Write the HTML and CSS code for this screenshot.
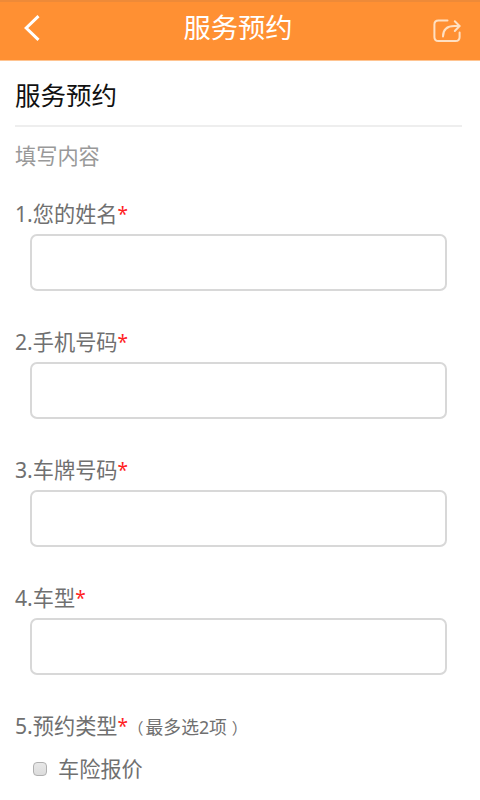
FILE: index.html
```html
<!DOCTYPE html>
<html lang="zh-CN">
<head>
<meta charset="utf-8">
<title>服务预约</title>
<link rel="stylesheet" href="styles.css">
</head>
<body>
<header class="bar">
  <svg class="back" width="18" height="30" viewBox="0 0 18 30"><path d="M15.5 3.2 3.2 15 15.5 26.8"/></svg>
  <h1 class="bar-title">服务预约</h1>
  <svg class="share" width="30" height="26" viewBox="0 0 30 26"><path d="M15.5 2.4H6.5Q2.4 2.4 2.4 6.5V19Q2.4 23.1 6.5 23.1H23.5Q27.6 23.1 27.6 19V14.5"/><path d="M11 18.5C11 12 15 8 22.5 8H26.5M22.8 3.2 27.6 8 22.8 13"/></svg>
</header>
<main class="page">
  <h2 class="heading">服务预约</h2>
  <p class="hint">填写内容</p>
  <form>
    <div class="question"><label class="label" for="q1">1.您的姓名<span class="required">*</span></label><input class="field" id="q1" type="text"></div>
    <div class="question"><label class="label" for="q2">2.手机号码<span class="required">*</span></label><input class="field" id="q2" type="text"></div>
    <div class="question"><label class="label" for="q3">3.车牌号码<span class="required">*</span></label><input class="field" id="q3" type="text"></div>
    <div class="question"><label class="label" for="q4">4.车型<span class="required">*</span></label><input class="field" id="q4" type="text"></div>
    <div class="question">
      <div class="label">5.预约类型<span class="required">*</span><span class="note"><span class="paren open">（</span>最多选2项<span class="paren close">）</span></span></div>
      <label class="option"><input class="check" type="checkbox"><span>车险报价</span></label>
    </div>
  </form>
</main>
</body>
</html>
```

FILE: styles.css
```css
* {
  box-sizing: border-box;
}

body {
  margin: 0;
  height: 800px;
  overflow: hidden;
  background: #fff;
  color: #707070;
  font-family: "Noto Sans", "Noto Sans CJK SC", sans-serif;
}

h1, h2, p {
  margin: 0;
  font-weight: 400;
}

.bar {
  display: flex;
  align-items: center;
  justify-content: space-between;
  height: 61px;
  padding: 0 18px 6px 23px;
  border-top: 2px solid #ee8a38;
  border-bottom: 1px solid #ffc491;
  background: #ff9033;
}

.bar-title {
  margin: 0 0 0 3px;
  color: #fff;
  font-size: 27.3px;
  line-height: 40px;
}

.back,
.share {
  fill: none;
  stroke: #fff;
}

.back {
  stroke-width: 3;
}

.share {
  margin-top: 5px;
  stroke: #ffe0c2;
  stroke-width: 2;
  stroke-linecap: round;
}

.page {
  padding: 0 18px 0 15px;
}

.heading {
  height: 66px;
  padding-top: 14px;
  border-bottom: 2px solid #eee;
  color: #111;
  font-size: 25.5px;
  line-height: 40px;
}

.hint {
  height: 72px;
  padding-top: 13px;
  color: #999;
  font-size: 21.2px;
  line-height: 32px;
}

.question {
  height: 128px;
}

.label {
  display: block;
  height: 35px;
  font-size: 21.2px;
  line-height: 29px;
  white-space: nowrap;
}

.required {
  color: #f22;
  font-size: 19px;
  line-height: 1;
  vertical-align: 1px;
}

.note {
  font-size: 17.8px;
}

.paren {
  font-size: 15.5px;
}

.open {
  margin-right: 2px;
}

.close {
  margin-left: 5px;
}

.field {
  display: block;
  width: 417px;
  height: 57px;
  margin-left: 15px;
  padding: 0 12px;
  border: 2px solid #d8d8d8;
  border-radius: 7px;
  background: #fff;
  font: inherit;
  font-size: 21px;
}

.option {
  display: flex;
  align-items: center;
  gap: 11px;
  height: 30px;
  margin: 8px 0 0 18px;
  font-size: 21.2px;
  line-height: 30px;
}

.check {
  appearance: none;
  width: 14px;
  height: 14px;
  margin: 0;
  border: 1.5px solid #b0b0b0;
  border-radius: 4px;
  background: linear-gradient(#e8e8e8, #dcdcdc);
}
```
